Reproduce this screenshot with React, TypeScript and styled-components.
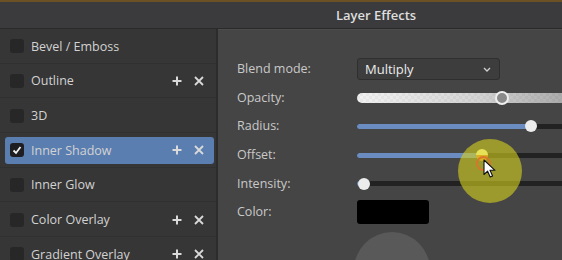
import React from 'react';
import styled, { createGlobalStyle } from 'styled-components';

const GlobalStyle = createGlobalStyle`
  html, body {
    margin: 0;
    padding: 0;
    background: #454545;
  }
  body {
    font-family: "Open Sans", "Noto Sans", sans-serif;
  }
`;

const Window = styled.div`
  position: relative;
  width: 562px;
  height: 260px;
  overflow: hidden;
  display: flex;
  flex-direction: column;
  background: #454545;
`;

const TopStrip = styled.div`
  height: 2px;
  background: #6b5124;
`;

const TitleBar = styled.div`
  height: 26px;
  display: flex;
  align-items: center;
  padding-left: 336px;
  background: #3b3b3d;
  border-bottom: 1px solid #2a2a2a;
  color: #dedede;
  font-size: 13px;
  font-weight: 600;
`;

const Body = styled.div`
  flex: 1;
  display: flex;
  min-height: 0;
`;

const Sidebar = styled.div`
  width: 216px;
  flex-shrink: 0;
  background: #363636;
  border-right: 2px solid #2c2c2c;
  display: flex;
  flex-direction: column;
`;

const Row = styled.div`
  height: 34.67px;
  flex-shrink: 0;
  box-sizing: border-box;
  padding: 4px 2px 3px 5px;
  border-bottom: 1px solid #303030;
`;

const RowInner = styled.div<{ $active?: boolean }>`
  height: 100%;
  display: flex;
  align-items: center;
  gap: 7px;
  padding: 0 10px 0 5px;
  border-radius: 3px;
  background: ${(p) => (p.$active ? '#5b7eb1' : 'transparent')};
  color: #d2d2d2;
  font-size: 12.5px;
`;

const Check = styled.div<{ $on?: boolean }>`
  width: 14px;
  height: 14px;
  border-radius: 3px;
  background: ${(p) => (p.$on ? '#1e1e22' : '#272727')};
  display: flex;
  align-items: center;
  justify-content: center;
  flex-shrink: 0;
`;

const Label = styled.span`
  flex: 1;
  white-space: nowrap;
`;

const Actions = styled.div`
  display: flex;
  gap: 12px;
  align-items: center;
`;

const Panel = styled.div`
  position: relative;
  flex: 1;
  padding: 25px 0 0 19px;
  border-top: 1px solid #4c4c4c;
  overflow: hidden;
`;

const Grid = styled.div`
  display: grid;
  grid-template-columns: 120px 240px;
  grid-auto-rows: 28.6px;
  align-items: center;
`;

const FieldLabel = styled.div`
  color: #c9c9c9;
  font-size: 12.5px;
  margin-top: -1px;
`;

const Select = styled.div`
  width: 143px;
  height: 22px;
  box-sizing: border-box;
  border: 1px solid #2f2f2f;
  border-radius: 3px;
  background: #3d3d3d;
  display: flex;
  align-items: center;
  justify-content: space-between;
  padding: 0 8px 0 7px;
  color: #ececec;
  font-size: 13px;
`;

const Track = styled.div<{ $thick?: boolean }>`
  position: relative;
  height: ${(p) => (p.$thick ? 10 : 5)}px;
  width: 240px;
  border-radius: 5px 0 0 5px;
  background: #222;
`;

const OpacityTrack = styled(Track)`
  background:
    repeating-conic-gradient(rgba(0, 0, 0, 0.035) 0 25%, transparent 0 50%) 0 0 / 6px 6px,
    linear-gradient(90deg, #f2f2f2 0%, #d4d4d4 50%, #9c9c9c 100%);
`;

const Fill = styled.div`
  position: absolute;
  left: 0;
  top: 0;
  bottom: 0;
  border-radius: 3px 0 0 3px;
  background: #6a8cc0;
`;

const Knob = styled.div<{ $ring?: boolean }>`
  position: absolute;
  top: 50%;
  width: ${(p) => (p.$ring ? 14 : 12)}px;
  height: ${(p) => (p.$ring ? 14 : 12)}px;
  margin: ${(p) => (p.$ring ? '-7px 0 0 -7px' : '-6px 0 0 -6px')};
  box-sizing: border-box;
  border-radius: 50%;
  background: ${(p) => (p.$ring ? '#8a8a8a' : '#ececec')};
  border: ${(p) => (p.$ring ? '2px solid #efefef' : 'none')};
`;

const HotKnob = styled(Knob)`
  background: linear-gradient(180deg, #fff7b0 0 50%, #e07a2c 50% 100%);
`;

const Swatch = styled.div`
  width: 72px;
  height: 24px;
  border-radius: 3px;
  background: #000;
`;

const Preview = styled.div`
  width: 76px;
  height: 76px;
  margin: 5px 0 0 117px;
  border-radius: 50%;
  background: #595959;
`;

const Highlight = styled.div`
  position: absolute;
  left: 240px;
  top: 109px;
  width: 64px;
  height: 64px;
  border-radius: 50%;
  background: rgba(215, 210, 30, 0.6);
  pointer-events: none;
`;

const ClickRing = styled.div`
  position: absolute;
  left: 258px;
  top: 126px;
  width: 11px;
  height: 11px;
  border-radius: 50%;
  border: 2px solid #d9762a;
`;

const Cursor = styled.svg`
  position: absolute;
  left: 265px;
  top: 129px;
`;

const PlusIcon = () => (
  <svg width="10" height="10" viewBox="0 0 10 10">
    <path d="M5 0.5V9.5M0.5 5H9.5" stroke="#dadada" strokeWidth="2" />
  </svg>
);

const CloseIcon = () => (
  <svg width="10" height="10" viewBox="0 0 10 10">
    <path d="M1 1L9 9M9 1L1 9" stroke="#dadada" strokeWidth="1.8" />
  </svg>
);

type Effect = { name: string; editable: boolean; on?: boolean };

const effects: Effect[] = [
  { name: 'Bevel / Emboss', editable: false },
  { name: 'Outline', editable: true },
  { name: '3D', editable: false },
  { name: 'Inner Shadow', editable: true, on: true },
  { name: 'Inner Glow', editable: false },
  { name: 'Color Overlay', editable: true },
  { name: 'Gradient Overlay', editable: true },
];

const SLIDER_W = 240;

const Slider: React.FC<{ value: number; hot?: boolean }> = ({ value, hot }) => {
  const x = value * SLIDER_W;
  const K = hot ? HotKnob : Knob;
  return (
    <Track>
      <Fill style={{ width: x }} />
      <K style={{ left: x }} />
    </Track>
  );
};

export default function App() {
  return (
    <Window>
      <GlobalStyle />
      <TopStrip />
      <TitleBar>Layer Effects</TitleBar>
      <Body>
        <Sidebar>
          {effects.map((e) => (
            <Row key={e.name}>
              <RowInner $active={e.on}>
                <Check $on={e.on}>
                  {e.on && (
                    <svg width="10" height="10" viewBox="0 0 10 10">
                      <path d="M1.5 5.5L4 8L8.5 2" stroke="#f2f2f2" strokeWidth="1.8" fill="none" />
                    </svg>
                  )}
                </Check>
                <Label>{e.name}</Label>
                {e.editable && (
                  <Actions>
                    <PlusIcon />
                    <CloseIcon />
                  </Actions>
                )}
              </RowInner>
            </Row>
          ))}
        </Sidebar>
        <Panel>
          <Grid>
            <FieldLabel>Blend mode:</FieldLabel>
            <Select>
              Multiply
              <svg width="8" height="5" viewBox="0 0 8 5">
                <path d="M1 1L4 4L7 1" stroke="#d0d0d0" strokeWidth="1.3" fill="none" />
              </svg>
            </Select>
            <FieldLabel>Opacity:</FieldLabel>
            <OpacityTrack $thick>
              <Knob $ring style={{ left: 145 }} />
            </OpacityTrack>
            <FieldLabel>Radius:</FieldLabel>
            <Slider value={174 / SLIDER_W} />
            <FieldLabel>Offset:</FieldLabel>
            <Slider value={125 / SLIDER_W} hot />
            <FieldLabel>Intensity:</FieldLabel>
            <Slider value={7 / SLIDER_W} />
            <FieldLabel>Color:</FieldLabel>
            <Swatch />
          </Grid>
          <Preview />
          <Highlight />
          <ClickRing />
          <Cursor width="14" height="20" viewBox="0 0 14 20">
            <path d="M1 1V15.5L4.6 12.2L7.2 18L9.6 17L7 11.3H12Z" fill="#fff" stroke="#111" strokeWidth="1.1" strokeLinejoin="round" />
          </Cursor>
        </Panel>
      </Body>
    </Window>
  );
}
